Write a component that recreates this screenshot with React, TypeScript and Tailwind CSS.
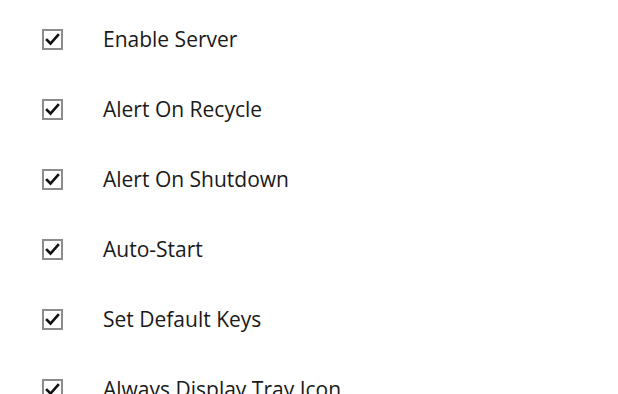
import React from 'react';

const items = [
    'Enable Server',
    'Alert On Recycle',
    'Alert On Shutdown',
    'Auto-Start',
    'Set Default Keys',
    'Always Display Tray Icon',
];

const CheckBox = () => (
    <div className="w-[21px] h-[21px] border-2 border-[#8c8c8c] bg-white flex items-center justify-center shrink-0">
        <svg width="15" height="13" viewBox="0 0 15 13">
            <polyline points="2,7 5.5,10.5 13,2" fill="none" stroke="#111" strokeWidth="2.6" strokeLinecap="square" />
        </svg>
    </div>
);

export default function App() {
    return (
        <div className="w-[618px] h-[394px] bg-white overflow-hidden pt-[4px] pl-[42px]" style={{ fontFamily: '"Open Sans", sans-serif' }}>
            {items.map((label) => (
                <div key={label} className="h-[70px] flex items-center gap-[40px]">
                    <CheckBox />
                    <span className="text-[21px] text-[#1a1a1a] leading-none">{label}</span>
                </div>
            ))}
        </div>
    );
}
